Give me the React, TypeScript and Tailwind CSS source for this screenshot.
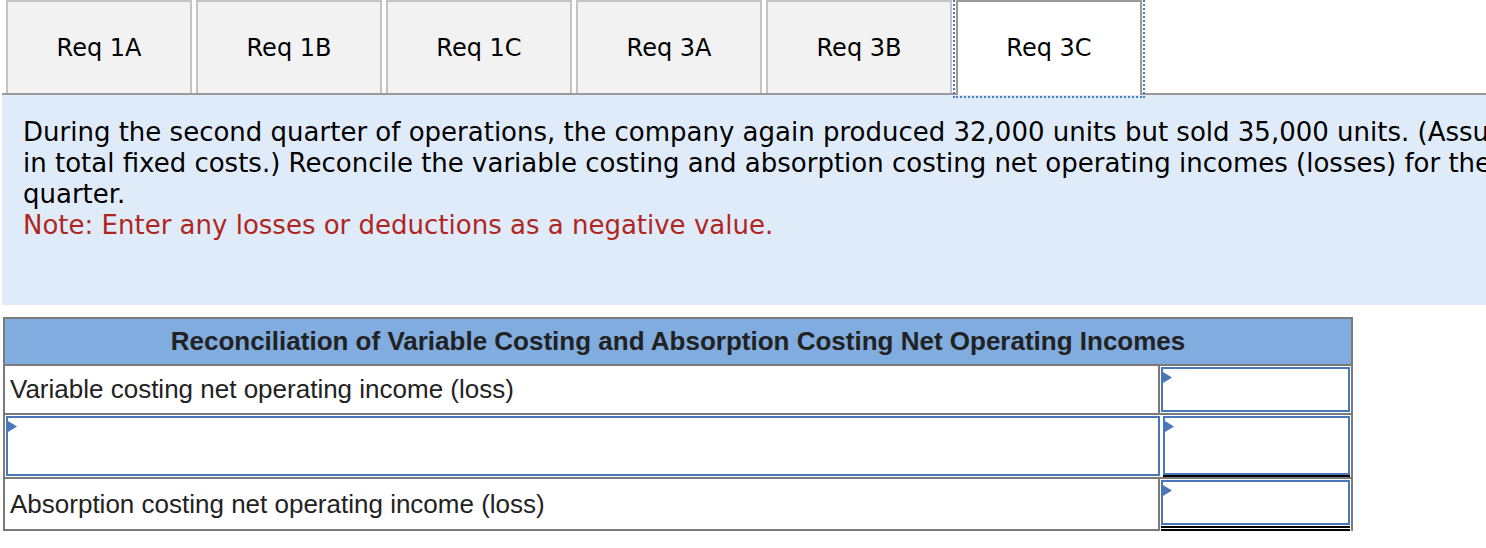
import React from "react";

const tabs = ["Req 1A", "Req 1B", "Req 1C", "Req 3A", "Req 3B", "Req 3C"];

function Marker() {
  return (
    <svg width="9" height="11" viewBox="0 0 9 11" className="absolute left-0 top-[3px]">
      <polygon points="0,0 9,5.5 0,11" fill="#4a77b8" />
    </svg>
  );
}

function InputBox({ underline }: { underline?: "single" | "double" }) {
  return (
    <div className="flex h-full flex-col">
      <div className="relative flex-1 border-2 border-[#4a77b8] bg-white">
        <Marker />
      </div>
      {underline === "single" && <div className="h-[2px] bg-black" />}
      {underline === "double" && (
        <div className="flex h-[6px] flex-col justify-between pt-[1px]">
          <div className="h-[2px] bg-black" />
          <div className="h-[2px] bg-black" />
        </div>
      )}
    </div>
  );
}

export default function App() {
  const active = 5;
  return (
    <div className="h-[548px] w-[1486px] overflow-hidden bg-white pl-[2px]">
      {/* tab bar */}
      <div className="flex h-[95px] w-[1600px] gap-[4px] border-b-2 border-[#9a9a9a] pl-[4px]">
        {tabs.map((t, i) => (
          <div
            key={t}
            className={
              i === active
                ? "relative z-10 -mb-[2px] flex h-[95px] w-[186px] items-center justify-center border-2 border-b-0 border-[#9a9a9a] bg-white pb-[2px] text-[24px] text-black outline-2 outline-offset-[1px] outline-dotted outline-[#4a7cc4]"
                : "flex h-[93px] w-[186px] items-center justify-center border-2 border-b-0 border-[#c4c4c4] bg-[#f2f2f2] text-[24px] text-black"
            }
            style={{ fontFamily: "'DejaVu Sans', Verdana, sans-serif" }}
          >
            {t}
          </div>
        ))}
      </div>

      {/* instructions */}
      <div
        className="h-[210px] w-[1700px] bg-[#dfebf8] pl-[21px] pt-[22px] text-[26px] leading-[31px] text-black"
        style={{ fontFamily: "'DejaVu Sans', Verdana, sans-serif" }}
      >
        <p className="whitespace-nowrap">
          During the second quarter of operations, the company again produced 32,000 units but sold 35,000 units. (Assume no change
        </p>
        <p className="whitespace-nowrap">
          in total fixed costs.) Reconcile the variable costing and absorption costing net operating incomes (losses) for the
        </p>
        <p className="whitespace-nowrap">quarter.</p>
        <p className="whitespace-nowrap text-[#b0261f]">Note: Enter any losses or deductions as a negative value.</p>
      </div>

      {/* reconciliation table */}
      <div
        className="ml-[1px] mt-[12px] w-[1350px] border-2 border-b-0 border-[#7a7a7a] text-[#222]"
        style={{ fontFamily: "'Liberation Sans', Arial, sans-serif" }}
      >
        <div className="flex h-[47px] items-center justify-center border-b-2 border-[#7a7a7a] bg-[#80acdf] text-[26px] font-bold">
          Reconciliation of Variable Costing and Absorption Costing Net Operating Incomes
        </div>

        <div className="flex h-[49px] border-b-2 border-[#7a7a7a]">
          <div className="flex w-[1155px] items-center border-r-2 border-[#7a7a7a] pl-[5px] text-[26px]">
            Variable costing net operating income (loss)
          </div>
          <div className="flex-1 p-[1px]">
            <InputBox />
          </div>
        </div>

        <div className="flex h-[64px] border-b-2 border-[#7a7a7a]">
          <div className="w-[1157px] p-[1px] pr-[2px]">
            <InputBox />
          </div>
          <div className="flex-1 p-[1px] pb-0">
            <InputBox underline="single" />
          </div>
        </div>

        <div className="flex h-[52px]">
          <div className="flex w-[1155px] items-center border-b-2 border-r-2 border-[#7a7a7a] pl-[5px] text-[26px]">
            Absorption costing net operating income (loss)
          </div>
          <div className="flex-1 p-[1px] pb-0">
            <InputBox underline="double" />
          </div>
        </div>
      </div>
    </div>
  );
}
